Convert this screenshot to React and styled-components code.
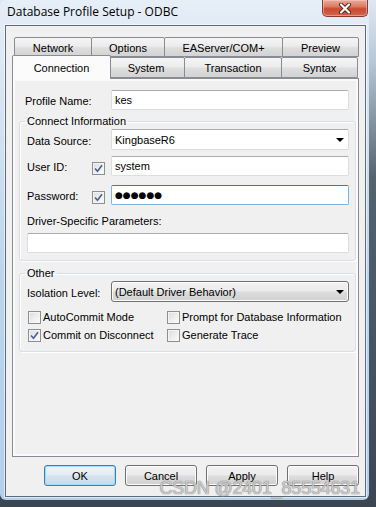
import styled, { createGlobalStyle } from "styled-components";

const GlobalStyle = createGlobalStyle`
  html, body {
    margin: 0;
    padding: 0;
  }
  body {
    font-family: "Liberation Sans", Arial, sans-serif;
    font-size: 11px;
    color: #000;
  }
`;

const Screen = styled.div`
  width: 376px;
  height: 507px;
  overflow: hidden;
  background: linear-gradient(to bottom, #dfe8f2 0%, #b9c8d6 12%, #55636f 35%, #3b4652 100%);
`;

const Window = styled.div`
  width: 369px;
  height: 500px;
  box-sizing: border-box;
  padding: 0 3px 3px 5px;
  display: flex;
  flex-direction: column;
  border-radius: 6px;
  background: linear-gradient(to bottom, #e6eef7 0%, #d6e4f2 20%, #bcd5ee 55%, #b2cfec 100%);
`;

const TitleBar = styled.div`
  height: 25px;
  display: flex;
  align-items: flex-start;
  justify-content: space-between;
  flex-shrink: 0;
`;

const Title = styled.div`
  font-family: "Open Sans", "Noto Sans", sans-serif;
  font-size: 12px;
  line-height: 16px;
  padding: 4px 0 0 2px;
  color: #000;
`;

const CloseButton = styled.div`
  width: 46px;
  height: 17px;
  box-sizing: border-box;
  margin-right: -2px;
  border: 1px solid #8a3a2c;
  border-top: none;
  border-radius: 0 0 5px 5px;
  background: linear-gradient(to bottom, #e9aa9b 0%, #dc7d66 40%, #c84a31 55%, #d2644c 100%);
  box-shadow: inset 0 0 0 1px rgba(255, 220, 210, 0.45);
  display: flex;
  align-items: center;
  justify-content: center;
`;

const Client = styled.div`
  flex: 1;
  position: relative;
  display: flex;
  flex-direction: column;
  background: #f0f0f0;
  border: 1px solid #5e6b78;
  box-shadow: 0 0 0 1px rgba(255, 255, 255, 0.55);
  padding: 11px 6px 10px 6px;
`;

const Tabs = styled.div`
  display: flex;
  flex-direction: column;
`;

const TabRow = styled.div`
  display: flex;
  align-items: flex-end;
  height: ${(p) => p.$height}px;
  margin-left: 2px;
`;

const Tab = styled.div`
  box-sizing: border-box;
  width: ${(p) => (p.$selected ? p.$width + 4 : p.$width)}px;
  height: ${(p) => (p.$selected ? 24 : p.$height)}px;
  margin-left: ${(p) => (p.$selected ? -2 : p.$first ? 0 : -1)}px;
  margin-right: ${(p) => (p.$selected ? -3 : 0)}px;
  margin-bottom: ${(p) => (p.$selected ? -1 : 0)}px;
  position: relative;
  z-index: ${(p) => (p.$selected ? 2 : 0)};
  border: 1px solid #898c95;
  border-bottom: ${(p) => (p.$selected ? "none" : "1px solid #898c95")};
  border-radius: 2px 2px 0 0;
  background: ${(p) =>
    p.$selected
      ? "#fbfbfb"
      : "linear-gradient(to bottom, #f5f5f5 0%, #ececec 45%, #dedede 55%, #d3d3d3 100%)"};
  display: flex;
  align-items: center;
  justify-content: center;
  padding-top: ${(p) => (p.$selected ? 0 : 1)}px;
  font-size: 11px;
`;

const Panel = styled.div`
  flex: 1;
  border: 1px solid #898c95;
  background: #f0f0f0;
  box-shadow: inset 0 0 0 2px #fafafa;
  padding: 11px 2px 0 6px;
  display: flex;
  flex-direction: column;
`;

const FormRow = styled.div`
  display: grid;
  grid-template-columns: ${(p) => p.$cols};
  align-items: center;
  margin-top: ${(p) => p.$top || 0}px;
  padding: ${(p) => p.$pad || 0};
`;

const Label = styled.div`
  line-height: 14px;
  padding-top: 2px;
  white-space: nowrap;
`;

const TextBox = styled.div`
  box-sizing: border-box;
  height: 20px;
  background: #fff;
  border: 1px solid ${(p) => (p.$focused ? "#7eb4ea" : "#dadde3")};
  border-top-color: ${(p) => (p.$focused ? "#3d7bad" : "#abadb3")};
  border-radius: 2px;
  padding: 0 3px;
  display: flex;
  align-items: center;
  font-family: ${(p) => (p.$dots ? '"DejaVu Sans", sans-serif' : "inherit")};
  font-size: ${(p) => (p.$dots ? 9 : 11)}px;
  letter-spacing: 0;
  white-space: nowrap;
`;

const Combo = styled.div`
  box-sizing: border-box;
  height: 21px;
  border-radius: ${(p) => (p.$button ? 3 : 2)}px;
  border: 1px solid ${(p) => (p.$button ? "#707070" : "#dadde3")};
  border-top-color: ${(p) => (p.$button ? "#707070" : "#abadb3")};
  background: ${(p) =>
    p.$button
      ? "linear-gradient(to bottom, #f3f3f3 0%, #ebebeb 48%, #dddddd 52%, #d0d0d0 100%)"
      : "#fff"};
  box-shadow: ${(p) => (p.$button ? "inset 0 0 0 1px #fcfcfc" : "none")};
  display: flex;
  align-items: center;
  justify-content: space-between;
  padding: 0 4px 0 3px;
  white-space: nowrap;
`;

const Arrow = styled.span`
  width: 0;
  height: 0;
  border-left: 4px solid transparent;
  border-right: 4px solid transparent;
  border-top: 4px solid #000;
  margin-top: 1px;
`;

const Group = styled.fieldset`
  margin: ${(p) => p.$top}px 0 0 0;
  padding: ${(p) => p.$pad};
  border: 1px solid #d5dfe5;
  border-radius: 3px;
  box-shadow: inset 1px 1px 0 #fff, 1px 1px 0 #fff;
  min-width: 0;
`;

const Legend = styled.legend`
  padding: 0 2px;
  margin-left: -2px;
  line-height: 14px;
  font-size: 11px;
`;

const CheckBox = styled.span`
  box-sizing: border-box;
  width: 13px;
  height: 13px;
  flex-shrink: 0;
  border: 1px solid #8e8f8f;
  background: linear-gradient(135deg, #dcdcdc 0%, #f0f0f0 60%, #fdfdfd 100%);
  box-shadow: inset 0 0 0 1px #f4f4f4;
  margin-top: ${(p) => p.$shift || 0}px;
  display: flex;
  align-items: center;
  justify-content: center;
`;

const CheckGrid = styled.div`
  display: grid;
  grid-template-columns: 139px 1fr;
  row-gap: 5px;
  margin-top: 9px;
`;

const CheckItem = styled.div`
  display: flex;
  align-items: center;
  gap: 2px;
  padding-left: 1px;
  height: 13px;
  line-height: 13px;
  white-space: nowrap;
`;

const ButtonRow = styled.div`
  display: flex;
  justify-content: flex-end;
  gap: 9px;
  margin-top: 8px;
`;

const Button = styled.button`
  box-sizing: border-box;
  width: 72px;
  height: 21px;
  padding: 0;
  font-family: "Liberation Sans", Arial, sans-serif;
  font-size: 11px;
  color: #000;
  border-radius: 3px;
  border: 1px solid ${(p) => (p.$default ? "#3c7fb1" : "#707070")};
  background: ${(p) =>
    p.$default
      ? "linear-gradient(to bottom, #edf3f8 0%, #e2ecf4 48%, #d5e3ee 52%, #c8dae8 100%)"
      : "linear-gradient(to bottom, #f3f3f3 0%, #ebebeb 48%, #dddddd 52%, #d0d0d0 100%)"};
  box-shadow: ${(p) => (p.$default ? "inset 0 0 0 1px #9fdcf8" : "inset 0 0 0 1px #fcfcfc")};
`;

const Watermark = styled.div`
  position: absolute;
  right: 5px;
  bottom: -3px;
  font-family: "Liberation Sans", Arial, sans-serif;
  font-size: 18px;
  letter-spacing: -0.2px;
  color: rgba(255, 255, 255, 0.6);
  text-shadow: 0 0 1px #7a7a7a, 0 0 1px #7a7a7a;
  pointer-events: none;
  white-space: nowrap;
`;

const Check = () => (
  <svg width="9" height="9" viewBox="0 0 9 9">
    <path d="M1 4.5 L3.5 7.2 L8 1.2" fill="none" stroke="#4a5f97" strokeWidth="1.6" />
  </svg>
);

const rowOne = [
  ["Network", 78],
  ["Options", 74],
  ["EAServer/COM+", 119],
  ["Preview", 77],
];

const rowTwo = [
  ["Connection", 95, true],
  ["System", 78],
  ["Transaction", 98],
  ["Syntax", 77],
];

export default function App() {
  return (
    <>
      <GlobalStyle />
      <Screen>
        <Window>
          <TitleBar>
            <Title>Database Profile Setup - ODBC</Title>
            <CloseButton>
              <svg width="14" height="11" viewBox="0 0 14 11">
                <path d="M3 1.5 L11 9.5 M11 1.5 L3 9.5" stroke="#5a2218" strokeWidth="4" strokeLinecap="round" />
                <path d="M3 1.5 L11 9.5 M11 1.5 L3 9.5" stroke="#fff" strokeWidth="2.2" strokeLinecap="round" />
              </svg>
            </CloseButton>
          </TitleBar>
          <Client>
            <Tabs>
              <TabRow $height={20}>
                {rowOne.map(([name, w], i) => (
                  <Tab key={name} $width={w} $height={20} $first={i === 0}>
                    {name}
                  </Tab>
                ))}
              </TabRow>
              <TabRow $height={21}>
                {rowTwo.map(([name, w, sel], i) => (
                  <Tab key={name} $width={w} $height={21} $first={i === 0} $selected={sel}>
                    {name}
                  </Tab>
                ))}
              </TabRow>
            </Tabs>
            <Panel>
              <FormRow $cols="86px 1fr" $pad="0 7px 0 6px">
                <Label>Profile Name:</Label>
                <TextBox>kes</TextBox>
              </FormRow>

              <Group $top={4} $pad="1px 6px 7px 7px">
                <Legend>Connect Information</Legend>
                <FormRow $cols="84px 1fr">
                  <Label>Data Source:</Label>
                  <Combo>
                    <span>KingbaseR6</span>
                    <Arrow />
                  </Combo>
                </FormRow>
                <FormRow $cols="65px 19px 1fr" $top={6}>
                  <Label>User ID:</Label>
                  <CheckBox $shift={5}>
                    <Check />
                  </CheckBox>
                  <TextBox>system</TextBox>
                </FormRow>
                <FormRow $cols="65px 19px 1fr" $top={9}>
                  <Label>Password:</Label>
                  <CheckBox $shift={5}>
                    <Check />
                  </CheckBox>
                  <TextBox $focused $dots>
                    ●●●●●●
                  </TextBox>
                </FormRow>
                <FormRow $cols="1fr" $top={7}>
                  <Label>Driver-Specific Parameters:</Label>
                </FormRow>
                <FormRow $cols="1fr" $top={5}>
                  <TextBox />
                </FormRow>
              </Group>

              <Group $top={5} $pad="1px 6px 9px 7px">
                <Legend>Other</Legend>
                <FormRow $cols="84px 1fr">
                  <Label>Isolation Level:</Label>
                  <Combo $button>
                    <span>(Default Driver Behavior)</span>
                    <Arrow />
                  </Combo>
                </FormRow>
                <CheckGrid>
                  <CheckItem>
                    <CheckBox />
                    AutoCommit Mode
                  </CheckItem>
                  <CheckItem>
                    <CheckBox />
                    Prompt for Database Information
                  </CheckItem>
                  <CheckItem>
                    <CheckBox>
                      <Check />
                    </CheckBox>
                    Commit on Disconnect
                  </CheckItem>
                  <CheckItem>
                    <CheckBox />
                    Generate Trace
                  </CheckItem>
                </CheckGrid>
              </Group>
            </Panel>
            <ButtonRow>
              <Button $default>OK</Button>
              <Button>Cancel</Button>
              <Button>Apply</Button>
              <Button>Help</Button>
            </ButtonRow>
            <Watermark>CSDN @2401_85554631</Watermark>
          </Client>
        </Window>
      </Screen>
    </>
  );
}
